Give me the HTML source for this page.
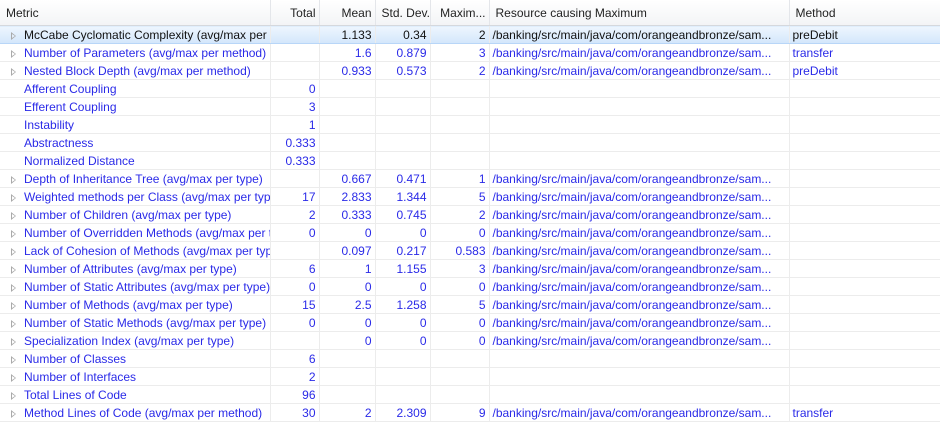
<!DOCTYPE html><html><head><style>
body{margin:0;width:940px;height:422px;overflow:hidden;background:#fff;font-family:"Liberation Sans",Arial,sans-serif;font-size:12px}
table{border-collapse:collapse;table-layout:fixed;width:940px;position:absolute;left:0;top:0}
td,th{height:15px;padding:2px 3px 0 3px;border-right:1px solid #ececec;border-bottom:1px solid #ececec;white-space:nowrap;overflow:hidden;color:#2a2ae8;line-height:15px}
th{height:25px;padding-top:0;line-height:24px;font-weight:normal;color:#222;background:linear-gradient(#fff,#f3f4f6);border-right:1px solid #e4e6ea;border-bottom:1px solid #d5d8dd;text-align:left;padding-left:6px}
th.r,td.r{text-align:right}
td.n{padding-left:24px;position:relative}
td.n.a:before{content:"";position:absolute;left:11px;top:6px;border-left:5px solid #aaa;border-top:4px solid transparent;border-bottom:4px solid transparent}
td.n.a:after{content:"";position:absolute;left:12px;top:7.5px;border-left:3px solid #fff;border-top:2.5px solid transparent;border-bottom:2.5px solid transparent}
tr.s td{background:linear-gradient(#eef6fe,#d3e6fb);color:#111;border-bottom:1px solid #b8d6f8}
tr.s td.n.a:after{border-left-color:#e3effc}
</style></head><body>
<table>
<colgroup><col style="width:270px"><col style="width:49px"><col style="width:56px"><col style="width:55px"><col style="width:59px"><col style="width:300px"><col style="width:151px"></colgroup>
<tr><th>Metric</th><th class="r">Total</th><th class="r">Mean</th><th class="r">Std. Dev.</th><th class="r">Maxim...</th><th>Resource causing Maximum</th><th>Method</th></tr>
<tr class="s"><td class="n a">McCabe Cyclomatic Complexity (avg/max per method)</td><td></td><td class="r">1.133</td><td class="r">0.34</td><td class="r">2</td><td>/banking/src/main/java/com/orangeandbronze/sam...</td><td>preDebit</td></tr>
<tr><td class="n a">Number of Parameters (avg/max per method)</td><td></td><td class="r">1.6</td><td class="r">0.879</td><td class="r">3</td><td>/banking/src/main/java/com/orangeandbronze/sam...</td><td>transfer</td></tr>
<tr><td class="n a">Nested Block Depth (avg/max per method)</td><td></td><td class="r">0.933</td><td class="r">0.573</td><td class="r">2</td><td>/banking/src/main/java/com/orangeandbronze/sam...</td><td>preDebit</td></tr>
<tr><td class="n">Afferent Coupling</td><td class="r">0</td><td></td><td></td><td></td><td></td><td></td></tr>
<tr><td class="n">Efferent Coupling</td><td class="r">3</td><td></td><td></td><td></td><td></td><td></td></tr>
<tr><td class="n">Instability</td><td class="r">1</td><td></td><td></td><td></td><td></td><td></td></tr>
<tr><td class="n">Abstractness</td><td class="r">0.333</td><td></td><td></td><td></td><td></td><td></td></tr>
<tr><td class="n">Normalized Distance</td><td class="r">0.333</td><td></td><td></td><td></td><td></td><td></td></tr>
<tr><td class="n a">Depth of Inheritance Tree (avg/max per type)</td><td></td><td class="r">0.667</td><td class="r">0.471</td><td class="r">1</td><td>/banking/src/main/java/com/orangeandbronze/sam...</td><td></td></tr>
<tr><td class="n a">Weighted methods per Class (avg/max per type)</td><td class="r">17</td><td class="r">2.833</td><td class="r">1.344</td><td class="r">5</td><td>/banking/src/main/java/com/orangeandbronze/sam...</td><td></td></tr>
<tr><td class="n a">Number of Children (avg/max per type)</td><td class="r">2</td><td class="r">0.333</td><td class="r">0.745</td><td class="r">2</td><td>/banking/src/main/java/com/orangeandbronze/sam...</td><td></td></tr>
<tr><td class="n a">Number of Overridden Methods (avg/max per type)</td><td class="r">0</td><td class="r">0</td><td class="r">0</td><td class="r">0</td><td>/banking/src/main/java/com/orangeandbronze/sam...</td><td></td></tr>
<tr><td class="n a">Lack of Cohesion of Methods (avg/max per type)</td><td></td><td class="r">0.097</td><td class="r">0.217</td><td class="r">0.583</td><td>/banking/src/main/java/com/orangeandbronze/sam...</td><td></td></tr>
<tr><td class="n a">Number of Attributes (avg/max per type)</td><td class="r">6</td><td class="r">1</td><td class="r">1.155</td><td class="r">3</td><td>/banking/src/main/java/com/orangeandbronze/sam...</td><td></td></tr>
<tr><td class="n a">Number of Static Attributes (avg/max per type)</td><td class="r">0</td><td class="r">0</td><td class="r">0</td><td class="r">0</td><td>/banking/src/main/java/com/orangeandbronze/sam...</td><td></td></tr>
<tr><td class="n a">Number of Methods (avg/max per type)</td><td class="r">15</td><td class="r">2.5</td><td class="r">1.258</td><td class="r">5</td><td>/banking/src/main/java/com/orangeandbronze/sam...</td><td></td></tr>
<tr><td class="n a">Number of Static Methods (avg/max per type)</td><td class="r">0</td><td class="r">0</td><td class="r">0</td><td class="r">0</td><td>/banking/src/main/java/com/orangeandbronze/sam...</td><td></td></tr>
<tr><td class="n a">Specialization Index (avg/max per type)</td><td></td><td class="r">0</td><td class="r">0</td><td class="r">0</td><td>/banking/src/main/java/com/orangeandbronze/sam...</td><td></td></tr>
<tr><td class="n a">Number of Classes</td><td class="r">6</td><td></td><td></td><td></td><td></td><td></td></tr>
<tr><td class="n a">Number of Interfaces</td><td class="r">2</td><td></td><td></td><td></td><td></td><td></td></tr>
<tr><td class="n a">Total Lines of Code</td><td class="r">96</td><td></td><td></td><td></td><td></td><td></td></tr>
<tr><td class="n a">Method Lines of Code (avg/max per method)</td><td class="r">30</td><td class="r">2</td><td class="r">2.309</td><td class="r">9</td><td>/banking/src/main/java/com/orangeandbronze/sam...</td><td>transfer</td></tr>
</table>
</body></html>
